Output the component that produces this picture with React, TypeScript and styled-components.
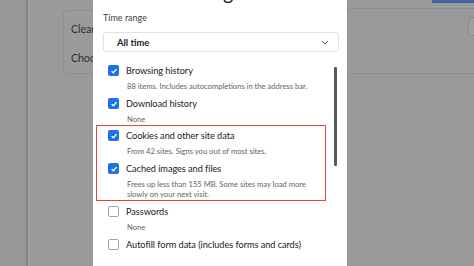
import React from 'react';
import styled, { createGlobalStyle } from 'styled-components';

const GlobalStyle = createGlobalStyle`
  html, body {
    margin: 0;
    padding: 0;
    width: 474px;
    height: 266px;
    overflow: hidden;
    background: #9a9a9a;
  }
  * {
    box-sizing: border-box;
  }
`;

const Screen = styled.div`
  display: flex;
  width: 474px;
  height: 266px;
  overflow: hidden;
  font-family: Lato, 'Open Sans', sans-serif;
`;

const LeftBackdrop = styled.div`
  width: 93px;
  flex-shrink: 0;
  display: flex;
  overflow: hidden;
  background: #9a9a9a;
`;

const SideRail = styled.div`
  width: 28px;
  flex-shrink: 0;
  background: #979797;
  border-right: 2px solid #828282;
  box-shadow: 1px 0 0 #a3a3a3;
`;

const PageArea = styled.div`
  flex: 1;
  padding: 10px 0 0 35px;
`;

const BgCard = styled.div`
  width: 120px;
  height: 64px;
  border: 1px solid #8e8e8e;
  border-radius: 4px;
  background: #9b9b9b;
  padding: 11px 0 0 7px;
  display: flex;
  flex-direction: column;
  gap: 15px;
`;

const BgText = styled.div`
  font-size: 10.5px;
  line-height: 14px;
  color: #2e2e2e;
  white-space: nowrap;
`;

const Dialog = styled.div`
  width: 254px;
  height: 266px;
  flex-shrink: 0;
  overflow: hidden;
  background: #fff;
  padding: 0 8px 0 10px;
  display: flex;
  flex-direction: column;

  & > * {
    flex-shrink: 0;
  }
`;

const Title = styled.div`
  margin-top: -20px;
  font-size: 20px;
  line-height: 24px;
  color: #202124;
  white-space: nowrap;
`;

const FieldLabel = styled.div`
  margin-top: 7px;
  font-size: 9px;
  line-height: 14px;
  color: #3c4043;
`;

const Select = styled.div`
  margin-top: 7px;
  height: 20px;
  border: 1px solid #dfe1e5;
  border-radius: 3px;
  display: flex;
  align-items: center;
  justify-content: space-between;
  padding: 0 9px 0 13px;
  font-size: 9.4px;
  font-weight: 700;
  color: #202124;
`;

const ScrollRow = styled.div`
  margin-top: 12px;
  display: flex;
  padding-right: 2px;
`;

const List = styled.div`
  flex: 1;
  padding-left: 5px;
  display: flex;
  flex-direction: column;
  gap: 6px;
`;

const Track = styled.div`
  width: 3px;
  flex-shrink: 0;
`;

const Thumb = styled.div`
  margin-top: 3px;
  height: 99px;
  width: 3px;
  border-radius: 1px;
  background: #5a5a5a;
`;

const Highlight = styled.div`
  margin: -5px 8px -2px -12px;
  border: 1px solid #e8453c;
  padding: 3px 0 1px 11px;
  display: flex;
  flex-direction: column;
  gap: 6px;
`;

const Item = styled.div`
  display: grid;
  grid-template-columns: 11px 1fr;
  column-gap: 7px;
`;

const Box = styled.div<{ $checked?: boolean }>`
  width: 11px;
  height: 11px;
  margin-top: 1px;
  border-radius: 2px;
  display: flex;
  align-items: center;
  justify-content: center;
  background: ${({ $checked }) => ($checked ? '#1a73e8' : '#fff')};
  border: ${({ $checked }) => ($checked ? 'none' : '1px solid #a0a4a8')};
`;

const Label = styled.div`
  font-size: 9.2px;
  letter-spacing: -0.05px;
  line-height: 14px;
  color: #202124;
  white-space: nowrap;
`;

const Sub = styled.div`
  grid-column: 2;
  margin-top: 3px;
  padding-left: 1px;
  font-size: 7.6px;
  line-height: 10px;
  color: #5f6368;
`;

const Footer = styled.div`
  margin-top: 14px;
  display: flex;
  justify-content: flex-end;
  gap: 7px;
  padding-right: 1px;
`;

const Button = styled.div<{ $primary?: boolean }>`
  width: ${({ $primary }) => ($primary ? '59px' : '63px')};
  height: 26px;
  border-radius: 4px;
  background: ${({ $primary }) => ($primary ? '#1a73e8' : '#fff')};
  border: 1px solid ${({ $primary }) => ($primary ? '#1a73e8' : '#dadce0')};
`;

const RightBackdrop = styled.div`
  flex: 1;
  background: #9a9a9a;
  border-left: 1px solid #949494;
  display: flex;
  flex-direction: column;
  align-items: flex-end;
`;

const TopStrip = styled.div`
  width: 100%;
  height: 9px;
  border-bottom: 1px solid #8f8f8f;
  display: flex;
  justify-content: flex-end;
`;

const AccountBar = styled.div`
  width: 42px;
  height: 3px;
  background: #44639f;
`;

const EdgeBox = styled.div`
  margin-top: 8px;
  width: 6px;
  height: 19px;
  border: 1px solid #8c8c8c;
  border-right: none;
  border-radius: 3px 0 0 3px;
  background: #9e9e9e;
`;

const Divider = styled.div`
  margin-top: 37px;
  width: 100%;
  height: 1px;
  background: #8f8f8f;
`;

const Check = () => (
  <svg width="8" height="8" viewBox="0 0 10 10">
    <path d="M2 5.2 L4.1 7.2 L8.2 2.8" fill="none" stroke="#fff" strokeWidth="1.6" />
  </svg>
);

const Chevron = () => (
  <svg width="8" height="5" viewBox="0 0 8 5">
    <path d="M1 1 L4 4 L7 1" fill="none" stroke="#5f6368" strokeWidth="1" />
  </svg>
);

type Option = { label: string; sub?: string[]; checked: boolean };

const Row: React.FC<Option> = ({ label, sub, checked }) => (
  <Item>
    <Box $checked={checked}>{checked && <Check />}</Box>
    <Label>{label}</Label>
    {sub && (
      <Sub>
        {sub.map((line) => (
          <div key={line}>{line}</div>
        ))}
      </Sub>
    )}
  </Item>
);

const App: React.FC = () => {
  return (
    <>
      <GlobalStyle />
      <Screen>
        <LeftBackdrop>
          <SideRail />
          <PageArea>
            <BgCard>
              <BgText>Clear browsing data</BgText>
              <BgText>Choose what to clear</BgText>
            </BgCard>
          </PageArea>
        </LeftBackdrop>

        <Dialog>
          <Title>Clear browsing data</Title>
          <FieldLabel>Time range</FieldLabel>
          <Select>
            All time
            <Chevron />
          </Select>
          <ScrollRow>
            <List>
              <Row
                checked
                label="Browsing history"
                sub={['88 items. Includes autocompletions in the address bar.']}
              />
              <Row checked label="Download history" sub={['None']} />
              <Highlight>
                <Row
                  checked
                  label="Cookies and other site data"
                  sub={['From 42 sites. Signs you out of most sites.']}
                />
                <Row
                  checked
                  label="Cached images and files"
                  sub={['Frees up less than 155 MB. Some sites may load more', 'slowly on your next visit.']}
                />
              </Highlight>
              <Row checked={false} label="Passwords" sub={['None']} />
              <Row checked={false} label="Autofill form data (includes forms and cards)" />
            </List>
            <Track>
              <Thumb />
            </Track>
          </ScrollRow>
          <Footer>
            <Button />
            <Button $primary />
          </Footer>
        </Dialog>

        <RightBackdrop>
          <TopStrip>
            <AccountBar />
          </TopStrip>
          <EdgeBox />
          <Divider />
        </RightBackdrop>
      </Screen>
    </>
  );
};

export default App;
